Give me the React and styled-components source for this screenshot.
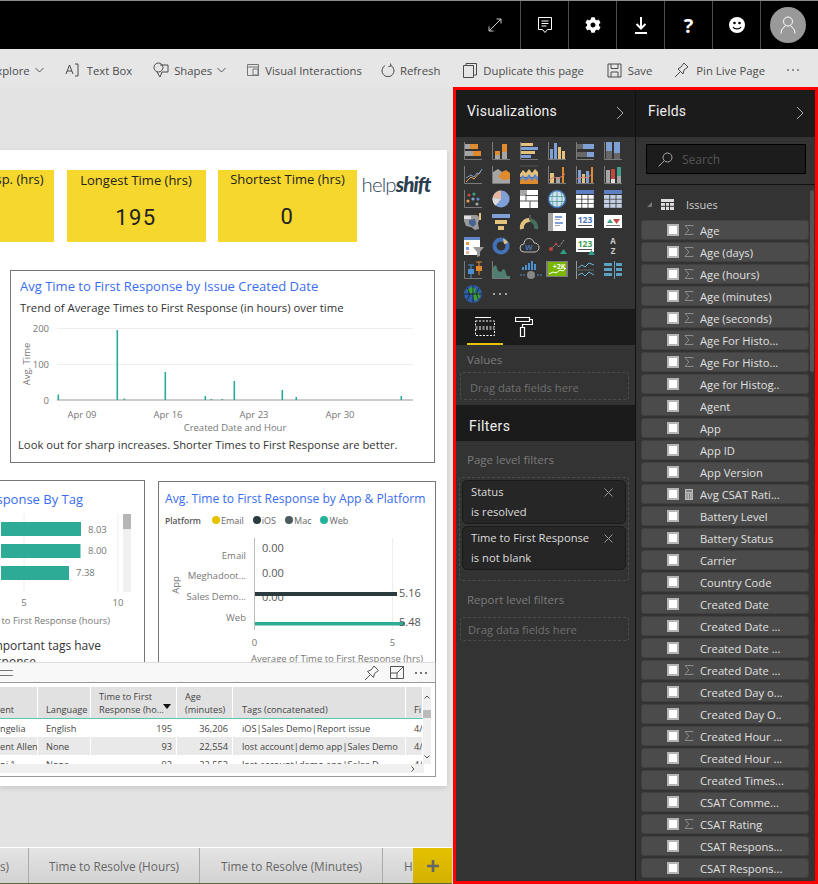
import React from "react";
import styled, { createGlobalStyle } from "styled-components";
import { FaCog } from "react-icons/fa";

const UI = `"Open Sans", "Noto Sans", sans-serif`;
const HEAD = `Roboto, "Open Sans", sans-serif`;
const TEAL = "#2dab97";

const Global = createGlobalStyle`
  * { box-sizing: border-box; }
  html, body { margin: 0; padding: 0; background: #e3e3e3; overflow: hidden; }
  body { font-family: ${UI}; }
`;

const Shell = styled.div`
  width: 818px;
  height: 884px;
  display: flex;
  flex-direction: column;
  overflow: hidden;
`;

/* top black bar */
const TopBar = styled.header`
  height: 49px;
  flex: none;
  background: #000;
  border-top: 1px solid #8a8a8a;
  display: flex;
  justify-content: flex-end;
  color: #fff;
`;
const TopBtn = styled.div`
  width: ${(p) => p.$w || 48}px;
  display: flex;
  align-items: center;
  justify-content: center;
  border-left: ${(p) => (p.$plain ? "none" : "1px solid #4d4d4d")};
  font: 700 20px ${UI};
`;
const Avatar = styled.div`
  width: 36px;
  height: 36px;
  margin-right: 3px;
  border-radius: 50%;
  background: #999;
  display: flex;
  align-items: center;
  justify-content: center;
`;

/* toolbar */
const ToolBar = styled.nav`
  height: 38px;
  flex: none;
  background: #e6e6e6;
  display: flex;
  align-items: center;
  padding-top: 4px;
  margin-left: -10px;
  white-space: nowrap;
`;
const Tool = styled.div`
  display: flex;
  align-items: center;
  gap: ${(p) => p.$gap ?? 5}px;
  margin-left: ${(p) => p.$ml || 0}px;
  font: 400 11.3px ${UI};
  color: #4c4c4c;
  svg { flex: none; }
`;

const Main = styled.main`
  flex: 1;
  min-height: 0;
  display: flex;
`;
const ReportArea = styled.section`
  width: 453px;
  flex: none;
  display: flex;
  flex-direction: column;
`;
const Canvas = styled.div`
  flex: 1;
  min-height: 0;
  padding-top: 63px;
  background: #e3e3e3;
  overflow: hidden;
`;
const Page = styled.div`
  position: relative;
  width: 447px;
  height: 636px;
  background: #fff;
  padding-top: 20px;
  box-shadow: 0 2px 5px rgba(0, 0, 0, 0.12);
  overflow: hidden;
`;

/* kpi cards */
const KpiRow = styled.div`
  display: flex;
  gap: 12.5px;
  margin-left: -85px;
`;
const Kpi = styled.div`
  width: 139px;
  height: 72px;
  background: #f6d72d;
  text-align: center;
  color: #222;
  padding-top: ${(p) => p.$top || 0}px;
`;
const KpiTitle = styled.div`
  font: 400 13px/18px ${UI};
`;
const KpiValue = styled.div`
  font: 400 22px/26px ${HEAD};
  letter-spacing: 1.4px;
  margin-top: 16px;
`;
const Logo = styled.div`
  margin: 1px 0 0 -8px;
  font: 300 20.5px/26px Lato, sans-serif;
  letter-spacing: -0.9px;
  color: #34495e;
  b { font-weight: 900; font-style: italic; color: #2c3e50; }
`;

/* report visuals */
const WideCard = styled.article`
  width: 425px;
  height: 193px;
  margin: 28px 0 0 10px;
  border: 1px solid #777;
  padding: 5px 0 0 9px;
  background: #fff;
`;
const VisualTitle = styled.h3`
  margin: 0;
  font: 400 ${(p) => p.$size || 13}px/20px ${UI};
  color: #3a6df0;
  white-space: nowrap;
  text-align: ${(p) => p.$align || "left"};
  padding-left: ${(p) => p.$pl || 0}px;
  padding-right: ${(p) => p.$pr || 0}px;
`;
const VisualSub = styled.p`
  margin: 2px 0 0;
  font: 400 11.3px/20px ${UI};
  color: #333;
  white-space: nowrap;
`;
const VisualNote = styled.p`
  margin: 3px 0 0 -2px;
  font: 400 11.25px/18px ${UI};
  color: #333;
  white-space: nowrap;
`;
const ChartSvg = styled.svg`
  display: block;
  margin-left: ${(p) => p.$ml || 0}px;
  margin-top: ${(p) => p.$mt || 0}px;
  text { font-family: ${UI}; }
`;
const VisualRow = styled.div`
  display: flex;
  gap: 13px;
  margin: 17px 0 0 -175px;
`;
const HalfCard = styled.article`
  width: ${(p) => p.$w}px;
  height: 200px;
  margin-top: ${(p) => p.$mt || 0}px;
  border: 1px solid #777;
  padding-top: ${(p) => p.$pt || 8}px;
  background: #fff;
  overflow: hidden;
`;
const TagNote = styled.div`
  margin-top: 11px;
  font: 400 12px/16px ${UI};
  color: #333;
  text-align: right;
  padding-right: 43px;
  span { display: block; white-space: nowrap; }
  span + span { padding-right: 65px; }
`;
const Legend = styled.div`
  display: flex;
  align-items: center;
  margin: 3px 0 0 6px;
  height: 16px;
  font: 400 9px ${UI};
  color: #666;
`;
const LegendName = styled.b`
  font-weight: 600;
  font-size: 8.5px;
  margin-right: 11px;
  color: #555;
`;
const LegendItem = styled.span`
  display: flex;
  align-items: center;
  gap: 1px;
  margin-right: 9px;
  &::before {
    content: "";
    width: 8px;
    height: 8px;
    border-radius: 50%;
    background: ${(p) => p.$c};
  }
`;

/* focused table, lies over the two lower visuals */
const TableOverlay = styled.div`
  position: absolute;
  left: 0;
  top: 512px;
  width: 436px;
  height: 115px;
  background: #fff;
  border-right: 1px solid #999;
  border-bottom: 1px solid #999;
  overflow: hidden;
`;
const OverlayBar = styled.div`
  height: 21px;
  background: #f8f8f8;
  border-top: 1px solid #ddd;
  border-bottom: 1px solid #999;
  display: flex;
  align-items: center;
  justify-content: flex-end;
  gap: 10px;
  padding-right: 7px;
  position: relative;
  &::before {
    content: "";
    position: absolute;
    left: 0;
    top: 7px;
    width: 13px;
    height: 4px;
    border-top: 1px solid #777;
    border-bottom: 1px solid #777;
  }
`;
const TableWrap = styled.div`
  margin-top: 4px;
  width: 423px;
  height: 78px;
  overflow: hidden;
`;
const Row = styled.div`
  display: grid;
  grid-template-columns: 38px 53px 86px 56px 173px 17px;
  height: ${(p) => p.$h || 18}px;
  background: ${(p) => p.$bg || "#fff"};
  border-bottom: ${(p) => (p.$head ? `1px solid #5cc5b4` : "none")};
  font: 400 9.2px/13px ${UI};
  color: #444;
`;
const Cell = styled.div`
  display: flex;
  align-items: ${(p) => (p.$head ? "flex-end" : "center")};
  justify-content: ${(p) => (p.$right ? "flex-end" : "flex-start")};
  padding: 0 ${(p) => (p.$right ? 4 : 0)}px ${(p) => (p.$head ? 2 : 0)}px ${(p) => p.$pl ?? 8}px;
  border-right: 1px solid #fff;
  white-space: nowrap;
  overflow: hidden;
  position: relative;
`;
const HeadText = styled.span`
  display: block;
`;
const SortMark = styled.i`
  position: absolute;
  right: 5px;
  bottom: 9px;
  border: 4px solid transparent;
  border-top: 5px solid #111;
  border-bottom: 0;
`;
const VScroll = styled.div`
  position: absolute;
  left: 423px;
  top: 25px;
  width: 8px;
  height: 77px;
  padding: 8px 0 5px;
  background: #f0f0f0;
  display: flex;
  flex-direction: column;
  justify-content: space-between;
  align-items: center;
  &::after {
    content: "";
    position: absolute;
    left: 0;
    top: 23px;
    width: 100%;
    height: 8px;
    background: #bbb;
  }
`;
const HScroll = styled.div`
  position: absolute;
  left: 0;
  top: 102px;
  width: 424px;
  height: 9px;
  padding-right: 9px;
  background: #f0f0f0;
  display: flex;
  align-items: center;
  justify-content: flex-end;
`;

/* tabs */
const TabStrip = styled.div`
  height: 37px;
  flex: none;
  display: flex;
  position: relative;
  overflow: hidden;
  background: linear-gradient(#e4e4e4, #d2d2d2);
  border-top: 1px solid #fff;
  border-bottom: 1px solid #5c6b3c;
  margin-right: 1px;
`;
const PageTab = styled.div`
  width: ${(p) => p.$w}px;
  flex: none;
  border-right: 1px solid #aaa;
  display: flex;
  align-items: center;
  padding-left: ${(p) => p.$pl}px;
  font: 400 11.8px ${UI};
  color: #666;
  white-space: nowrap;
`;
const AddTab = styled.div`
  position: absolute;
  right: 0;
  top: 0;
  bottom: 0;
  width: 39px;
  background: linear-gradient(#e4c200, #d3b000);
  display: flex;
  align-items: center;
  justify-content: center;
`;

/* right panes */
const Panes = styled.aside`
  width: 365px;
  flex: none;
  border: 3px solid #f00;
  display: flex;
  background: #333;
  position: relative;
`;
const Pane = styled.div`
  width: ${(p) => (p.$split ? 180 : 179)}px;
  flex: none;
  display: flex;
  flex-direction: column;
  border-right: ${(p) => (p.$split ? "1px solid #111" : "none")};
  color: #ddd;
  overflow: hidden;
`;
const PaneHead = styled.div`
  height: 47px;
  flex: none;
  background: #1b1b1b;
  display: flex;
  align-items: flex-start;
  justify-content: space-between;
  padding: 13px 11px 0 ${(p) => p.$pl || 11}px;
  font: 400 14px/17px ${HEAD};
  letter-spacing: 0.2px;
  color: #eee;
`;
const Gallery = styled.div`
  height: 172px;
  flex: none;
  padding: 5px 0 0 8px;
  display: grid;
  grid-template-columns: repeat(6, 28px);
  grid-auto-rows: 23.8px;
`;
const VizIcon = styled.svg`
  width: 18px;
  height: 18px;
  overflow: visible;
`;
const PaneTabs = styled.div`
  height: 36px;
  flex: none;
  background: #1b1b1b;
  display: flex;
  padding-left: 11px;
`;
const PaneTab = styled.div`
  width: 36px;
  height: 36px;
  padding-top: 8px;
  margin-right: 3px;
  display: flex;
  justify-content: center;
  border-bottom: 2px solid ${(p) => (p.$on ? "#e6c200" : "transparent")};
`;
const SectionLabel = styled.div`
  font: 400 11.5px/16px ${UI};
  color: #7b7b7b;
  margin: ${(p) => p.$m};
`;
const DropZone = styled.div`
  margin: ${(p) => p.$m || "4px 6px 0 4px"};
  height: ${(p) => p.$h || 28}px;
  border: 1px dashed #4c4c4c;
  border-radius: 3px;
  padding: ${(p) => p.$pt ?? 2}px 0 0 ${(p) => p.$pl || 9}px;
  display: flex;
  align-items: center;
  font: 400 11.2px ${UI};
  color: #707070;
`;
const FilterHead = styled.div`
  height: 36px;
  flex: none;
  margin-top: 5px;
  background: #1b1b1b;
  padding: 13px 0 0 13px;
  font: 400 14px/17px ${HEAD};
  letter-spacing: 0.4px;
  color: #eee;
`;
const FilterZone = styled.div`
  margin: 9px 6px 0 3px;
  height: 104px;
  border: 1px dashed #4c4c4c;
  border-radius: 3px;
  padding: 2px;
  display: flex;
  flex-direction: column;
  gap: 2px;
`;
const FilterChip = styled.div`
  height: 44px;
  background: #262626;
  border: 1px solid #1a1a1a;
  border-radius: 5px;
  padding: 1px 0 0 8px;
  position: relative;
  font: 400 11.2px/20px ${UI};
  color: #ddd;
  white-space: nowrap;
`;
const ChipClose = styled.svg`
  position: absolute;
  right: 12px;
  top: 7px;
`;
const SearchRow = styled.div`
  height: 48px;
  flex: none;
  border-bottom: 1px solid #111;
  padding: 7px 9px 0 10px;
`;
const SearchBox = styled.div`
  height: 30px;
  background: #1c1c1c;
  border: 1px solid #000;
  display: flex;
  align-items: center;
  gap: 9px;
  padding-left: 11px;
  font: 400 12px ${UI};
  color: #555;
`;
const TableHead = styled.div`
  height: 35px;
  flex: none;
  display: flex;
  align-items: center;
  padding: 4px 0 0 10px;
  font: 400 11px ${UI};
  color: #ccc;
`;
const FieldList = styled.div`
  display: flex;
  flex-direction: column;
  gap: 2px;
  padding: 0 6px 0 5px;
`;
const FieldRow = styled.div`
  height: 20px;
  flex: none;
  background: #4b4b4b;
  border: 1px solid #404040;
  border-radius: 3px;
  display: grid;
  grid-template-columns: 25px 17px 16px 1fr;
  align-items: center;
  font: 400 11.2px ${UI};
  color: #e0e0e0;
  white-space: nowrap;
  svg { grid-column: 3; }
  span { grid-column: 4; }
`;
const Check = styled.i`
  grid-column: 2;
  width: 12px;
  height: 12px;
  background: #fff;
  border: 2px solid #b5b5b5;
`;
const FieldScroll = styled.div`
  position: absolute;
  right: 1px;
  top: 100px;
  width: 4px;
  height: 182px;
  background: #555;
  border-radius: 2px;
`;

/* small drawing helpers */
const B = ({ x, y, w, h, f }) => <rect x={x} y={y} width={w} height={h} fill={f} />;
const Ax = () => <path d="M.5 0V17.5H18" stroke="#7a7a7a" fill="none" />;
const OR = "#e08a2e";
const GR = "#a5a5a5";
const TN = "#e3c27f";
const BL = "#7fa0d6";
const DK = "#666";
const WH = "#fff";
const THEAD = "#5b7fc0";

const TableGlyph = ({ head = THEAD, cell = WH }) => (
  <>
    <B x={0} y={0} w={18} h={4} f={head} />
    {[0, 6.2, 12.4].map((x) =>
      [5, 9.5, 14].map((y) => <B key={`${x}-${y}`} x={x} y={y} w={5.4} h={3.8} f={cell} />)
    )}
  </>
);

const Globe = ({ land = "#cfe3f5", sea = "#3b6ab0" }) => (
  <>
    <circle cx="9" cy="9" r="8.5" fill={land} stroke={sea} strokeWidth="1.4" />
    <path d="M1 6.5h16M1 11.5h16M9 .5v17M5.5 1.5c-2 5-2 10 0 15M12.5 1.5c2 5 2 10 0 15" stroke="#4f9a8c" fill="none" strokeWidth=".8" />
  </>
);

const vizIcons = [
  <><Ax /><B x={1} y={2} w={5} h={5} f={GR} /><B x={6} y={2} w={8} h={5} f={OR} /><B x={1} y={9} w={8} h={5} f={GR} /><B x={9} y={9} w={8} h={5} f={OR} /></>,
  <><Ax /><B x={3} y={9} w={5} h={8} f={OR} /><B x={3} y={13} w={5} h={4} f={GR} /><B x={10} y={2} w={5} h={8} f={OR} /><B x={10} y={10} w={5} h={7} f={GR} /></>,
  <><Ax /><B x={1} y={1} w={12} h={3} f={TN} /><B x={1} y={5} w={17} h={3} f={BL} /><B x={1} y={9} w={14} h={3} f={TN} /><B x={1} y={13} w={10} h={3} f={BL} /></>,
  <><Ax /><B x={2} y={7} w={3} h={10} f={BL} /><B x={6} y={1} w={3} h={16} f={BL} /><B x={10} y={5} w={3} h={12} f={TN} /><B x={14} y={9} w={3} h={8} f={TN} /></>,
  <><Ax /><B x={1} y={2} w={6} h={5} f={DK} /><B x={7} y={2} w={11} h={5} f={BL} /><B x={1} y={10} w={10} h={5} f={DK} /><B x={11} y={10} w={7} h={5} f={BL} /></>,
  <><Ax /><B x={2} y={0} w={6} h={9} f={BL} /><B x={2} y={9} w={6} h={8} f={DK} /><B x={10} y={0} w={6} h={11} f={BL} /><B x={10} y={11} w={6} h={6} f={DK} /></>,

  <><Ax /><path d="M2 16l5-5 3 2 7-8" stroke="#e6a04a" fill="none" /><path d="M2 12l5-3 3 2 3-4 2 1 3-5" stroke={BL} fill="none" /></>,
  <><Ax /><path d="M1 17V6l5-3 4 3 4-1 4 3v9z" fill={GR} /><path d="M6 11l4-5 4-2 4 3v6l-6 1z" fill={OR} /></>,
  <><path d="M0 0H18" stroke="#555" /><path d="M0 8l3-4 3 3 3-4 3 4 3-4 3 3v5H0z" fill={TN} /><path d="M0 12l3-3 3 3 3-4 3 4 3-4 3 3v4H0z" fill="#5f86c7" /><path d="M0 15l3-3 3 3 3-3 3 3 3-3 3 3v3H0z" fill={OR} /></>,
  <><Ax /><B x={2} y={7} w={4} h={10} f={TN} /><B x={8} y={11} w={4} h={6} f={GR} /><B x={14} y={1} w={2} h={16} f={OR} /><path d="M1 14l5-3 4 2 7-5" stroke="#d77d62" fill="none" /></>,
  <><Ax /><B x={2} y={4} w={3} h={13} f={BL} /><B x={6} y={8} w={3} h={9} f={TN} /><B x={10} y={5} w={3} h={12} f={BL} /><B x={15} y={1} w={2} h={16} f={OR} /><path d="M1 13l6-2 5 1 5-6" stroke="#d77d62" fill="none" /></>,
  <><Ax /><B x={2} y={4} w={4} h={13} f={GR} /><B x={7} y={9} w={4} h={8} f="#ddd" /><path d="M7 3h4v10H7z" fill="#c0483c" /><B x={13} y={1} w={4} h={9} f="#3f9f88" /><B x={13} y={10} w={4} h={7} f={GR} /></>,

  <><Ax /><circle cx="5" cy="5" r="1.6" fill="#c0483c" /><circle cx="10" cy="4" r="1.6" fill="#3f9f88" /><circle cx="4" cy="11" r="1.6" fill="#e6a04a" /><circle cx="9" cy="9" r="1.6" fill={BL} /><circle cx="14" cy="9" r="1.6" fill="#5f86c7" /><circle cx="13" cy="14" r="1.6" fill={GR} /></>,
  <><circle cx="9" cy="9" r="8.5" fill={BL} /><path d="M9 9V.5A8.5 8.5 0 0 0 .6 8z" fill="#e9b49c" /><path d="M9 9L.6 8a8.5 8.5 0 0 0 3 7.5z" fill="#ddd" /></>,
  <><B x={0} y={0} w={18} h={18} f={WH} /><B x={0} y={0} w={5} h={4} f={GR} /><path d="M6 0v11M0 11h18M0 5h6M6 5.500h12M10 11v7" stroke="#555" fill="none" /></>,
  <Globe />,
  <TableGlyph />,
  <TableGlyph cell="#c3cfe3" />,

  <><path d="M0 2h13l3 3-2 5 1 6-4 1-4-3-5-1-2-5z" fill="#9a9a9a" /><path d="M5 7l6-1 1 5-3 3-4-3z" fill="#44648f" /><B x={15} y={0} w={2} h={7} f="#e3c27f" /><B x={0} y={3} w={7} h={3} f="#ddd" /></>,
  <><B x={0} y={1} w={18} h={4} f={BL} /><B x={3} y={7} w={12} h={4} f={TN} /><B x={6} y={13} w={6} h={4} f={TN} /></>,
  <><path d="M2 16a7.500 7.500 0 0 1 8-9" stroke={TN} strokeWidth="4" fill="none" /><path d="M10 7a7.500 7.500 0 0 1 6 9" stroke="#47705f" strokeWidth="4" fill="none" /><path d="M9 2h2v5H9z" fill="#555" /></>,
  <><B x={0} y={0} w={18} h={18} f={WH} /><B x={0} y={0} w={5} h={18} f={GR} /><B x={7} y={3} w={7} h={2} f={BL} /><B x={7} y={6} w={5} h={1} f={GR} /><B x={7} y={9} w={8} h={2} f={BL} /><B x={7} y={12} w={5} h={1} f={GR} /></>,
  <><B x={0} y={1} w={18} h={14} f={WH} /><text x="9" y="10" fontSize="8.500" fontWeight="700" fill="#4b74b8" textAnchor="middle" fontFamily={UI}>123</text><B x={2} y={12} w={14} h={1} f="#555" /></>,
  <><B x={0} y={2} w={18} h={13} f={WH} /><path d="M3 10l3-4 3 4z" fill="#3f9f88" /><path d="M9 6h7l-3.500 5z" fill="#c0483c" /><B x={2} y={12} w={14} h={1} f="#777" /></>,

  <><B x={0} y={0} w={16} h={18} f={WH} /><B x={0} y={0} w={16} h={3} f="#5f86c7" /><B x={2} y={5} w={3} h={3} f="#e6a04a" /><B x={2} y={10} w={3} h={3} f={BL} /><B x={2} y={14} w={3} h={3} f="#e9b49c" /><path d="M9 10h11l-4 5v4l-3 1v-5z" fill="#999" /></>,
  <><circle cx="9" cy="9" r="6.500" fill="none" stroke="#4472b8" strokeWidth="4" /><path d="M11 1.500a8 8 0 0 1 5 4.500l-4 1z" fill="#e3c27f" /></>,
  <><path d="M4 15a4 4 0 0 1 0-8 5 5 0 0 1 10-1 4.500 4.500 0 0 1 1 9z" fill="none" stroke="#bbb" /><text x="9" y="13" fontSize="7.500" fontWeight="700" fill="#4b74b8" textAnchor="middle" fontFamily={UI}>W</text></>,
  <><path d="M3 12l5-5 3 3 5-7" stroke="#999" fill="none" strokeDasharray="2 1" /><circle cx="3" cy="12" r="2" fill="#c0483c" /><circle cx="8" cy="7" r="1.300" fill="#c0483c" /><path d="M12 17l3.500-5 3.500 5z" fill="#2f9f8c" /></>,
  <><B x={0} y={1} w={18} h={14} f={WH} /><text x="9" y="10" fontSize="8.500" fontWeight="700" fill="#3f9f4f" textAnchor="middle" fontFamily={UI}>123</text><B x={2} y={12} w={14} h={1} f="#555" /><path d="M12 18l3.500-5 3.500 5z" fill="#2f9f8c" /></>,
  <><text x="9" y="7" fontSize="8" fontWeight="700" fill="#ccc" textAnchor="middle" fontFamily={UI}>A</text><text x="9" y="17" fontSize="8" fontWeight="700" fill="#ccc" textAnchor="middle" fontFamily={UI}>Z</text></>,

  <><Ax /><B x={4} y={8} w={6} h={5} f="#4a90d0" /><path d="M7 4v13M4 4h6" stroke="#4a90d0" fill="none" /><B x={12} y={5} w={6} h={5} f={OR} /><path d="M15 1v13M12 1h6" stroke={OR} fill="none" /></>,
  <><Ax /><path d="M1 17V6l3-2 2 6 3 1 2-3 2 1 2 6h3v2z" fill="#4f7f71" /></>,
  <><B x={2} y={6} w={2} h={3} f="#4a90d0" /><B x={5} y={4} w={2} h={5} f="#4a90d0" /><B x={8} y={2} w={2} h={7} f="#4a90d0" /><B x={11} y={0} w={2} h={9} f="#4a90d0" /><B x={14} y={3} w={2} h={6} f="#4a90d0" /><circle cx="11" cy="14" r="4" fill="#888" /><path d="M0 14h5M17 14h6" stroke="#4a90d0" strokeDasharray="2 1" /></>,
  <><B x={-2} y={0} w={22} h={16} f="#7b7b7b" /><B x={0} y={1} w={18} h={14} f="#7ab800" /><text x="11" y="8" fontSize="7" fontWeight="700" fill="#fff" textAnchor="middle" fontFamily={UI}>+2K</text><path d="M1 13l4-2 3 1 4-3 3 1 3-3" stroke="#fff" fill="none" /></>,
  <><path d="M.5 0v18" stroke="#999" /><path d="M2 7l4-3 3 2 4-4 5 2" stroke="#6db5d8" fill="none" /><path d="M2 14l4-2 3 3 4-4 5 3" stroke="#6db5d8" fill="none" /><path d="M0 9h18" stroke="#666" /></>,
  <><B x={0} y={2} w={8} h={3} f="#5da0c0" /><B x={0} y={7} w={8} h={3} f="#5da0c0" /><B x={0} y={12} w={8} h={3} f="#5da0c0" /><path d="M10.500 0v18" stroke="#5da0c0" /><B x={12} y={2} w={6} h={3} f="#5da0c0" /><B x={12} y={7} w={6} h={3} f="#5da0c0" /><B x={12} y={12} w={6} h={3} f="#5da0c0" /></>,

  <><circle cx="9" cy="9" r="9" fill="#2f5ea8" /><path d="M3 5l5-3 4 2-2 4-4 1zM9 9l6-2 1 5-4 4-3-3z" fill="#3f9f3f" /><path d="M0 9h18M9 0v18M3 3c3 4 3 8 0 12M15 3c-3 4-3 8 0 12" stroke="#111" fill="none" strokeWidth=".7" /></>,
  <><circle cx="2" cy="9" r="1" fill="#ccc" /><circle cx="8" cy="9" r="1" fill="#ccc" /><circle cx="14" cy="9" r="1" fill="#ccc" /></>,
];

const Sigma = () => (
  <svg width="10" height="10" viewBox="0 0 10 10">
    <path d="M9 1.500V.5H1l3.800 4.500L1 9.500h8V8.500" fill="none" stroke="#8c8c8c" />
  </svg>
);
const Calc = () => (
  <svg width="10" height="11" viewBox="0 0 10 11">
    <rect x="1" y="0" width="8" height="11" fill="#bbb" />
    <path d="M2 2h6M2.500 5h1M5 5h1M7 5h.5M2.500 7h1M5 7h1M7 7h.5M2.500 9h1M5 9h1M7 9h.5" stroke="#444" />
  </svg>
);

const fields = [
  ["Age", "s"], ["Age (days)", "s"], ["Age (hours)", "s"], ["Age (minutes)", "s"], ["Age (seconds)", "s"],
  ["Age For Histo...", "s"], ["Age For Histo...", "s"], ["Age for Histog.."], ["Agent"], ["App"], ["App ID"],
  ["App Version"], ["Avg CSAT Rati...", "c"], ["Battery Level"], ["Battery Status"], ["Carrier"], ["Country Code"],
  ["Created Date"], ["Created Date ..."], ["Created Date ..."], ["Created Date ...", "s"], ["Created Day o..."],
  ["Created Day O.."], ["Created Hour ...", "s"], ["Created Hour ..."], ["Created Times..."], ["CSAT Comme..."],
  ["CSAT Rating", "s"], ["CSAT Respons..."], ["CSAT Respons..."],
];

const Chevron = () => (
  <svg width="8" height="14" viewBox="0 0 8 14" style={{ marginTop: 3 }}>
    <path d="M1 1l6 6-6 6" fill="none" stroke="#aaa" />
  </svg>
);
const Down = () => (
  <svg width="9" height="6" viewBox="0 0 9 6"><path d="M.5 1l4 4 4-4" fill="none" stroke="#555" /></svg>
);
const S = "#4a4a4a";
const Ic = ({ w = 16, h = 16, children }) => (
  <svg width={w} height={h} viewBox={`0 0 ${w} ${h}`} fill="none" stroke={S} strokeWidth="1">{children}</svg>
);

const WideChart = () => {
  const bars = [[58, 394.5], [117, 330], [124, 398.5], [165, 372], [205, 396], [211, 399], [222, 399], [234, 381], [282, 390], [296, 397], [401, 396]];
  return (
    <ChartSvg width="423" height="115" viewBox="11 318 423 115" $ml={-9}>
      <path d="M57 328.500H413M57 364.500H413" stroke="#eee" />
      <path d="M57 400H413" stroke="#bbb" strokeWidth="1.500" />
      {bars.map(([x, y]) => (
        <rect key={x} x={x - 0.5} y={y} width="1.600" height={400 - y} fill={TEAL} />
      ))}
      <g fontSize="9.500" fill="#777" textAnchor="end">
        <text x="49" y="331.500">200</text>
        <text x="49" y="367.500">100</text>
        <text x="49" y="403.500">0</text>
      </g>
      <g fontSize="9.500" fill="#777" textAnchor="middle">
        <text x="82" y="417.500">Apr 09</text>
        <text x="168" y="417.500">Apr 16</text>
        <text x="254" y="417.500">Apr 23</text>
        <text x="340" y="417.500">Apr 30</text>
        <text x="235" y="430.500">Created Date and Hour</text>
        <text transform="translate(30 364) rotate(-90)">Avg. Time</text>
      </g>
    </ChartSvg>
  );
};

const TagChart = () => (
  <ChartSvg width="144" height="118" viewBox="0 510 144 118" $ml={175}>
    <path d="M23 515V593M117 515V593" stroke="#eee" />
    <rect x="122" y="515" width="8" height="78" fill="#f0f0f0" />
    <rect x="122" y="515" width="8" height="15" fill="#b5b5b5" />
    <rect x="0" y="523" width="80" height="14" fill={TEAL} />
    <rect x="0" y="545" width="79.500" height="14" fill={TEAL} />
    <rect x="0" y="567" width="68" height="14" fill={TEAL} />
    <g fontSize="9.500" fill="#777">
      <text x="87" y="534">8.03</text>
      <text x="87" y="555">8.00</text>
      <text x="75" y="577">7.38</text>
    </g>
    <g fontSize="9.500" fill="#777" textAnchor="middle">
      <text x="23" y="606.500">5</text>
      <text x="117" y="606.500">10</text>
    </g>
    <text x="109" y="624.500" fontSize="9.400" fill="#777" textAnchor="end">e to First Response (hours)</text>
  </ChartSvg>
);

const PlatformChart = () => (
  <ChartSvg width="276" height="140" viewBox="159 530 276 140" $mt={2}>
    <path d="M254.500 538V630" stroke="#bbb" />
    <path d="M392.500 538V630" stroke="#eee" />
    <g fontSize="9.500" fill="#777" textAnchor="end">
      <text x="246" y="559">Email</text>
      <text x="246" y="579">Meghadoot...</text>
      <text x="246" y="600">Sales Demo...</text>
      <text x="246" y="621">Web</text>
    </g>
    <text transform="translate(179 585) rotate(-90)" fontSize="9.500" fill="#777" textAnchor="middle">App</text>
    <g fontSize="11" fill="#555">
      <text x="262" y="552">0.00</text>
      <text x="262" y="577">0.00</text>
      <text x="262" y="601">0.00</text>
    </g>
    <rect x="255" y="592" width="142" height="4" fill="#2b3a3d" />
    <rect x="255" y="622" width="150" height="3.500" fill={TEAL} />
    <g fontSize="11" fill="#555">
      <text x="399" y="597">5.16</text>
      <text x="399" y="626">5.48</text>
    </g>
    <g fontSize="9.500" fill="#777" textAnchor="middle">
      <text x="254.500" y="646">0</text>
      <text x="392.500" y="646">5</text>
      <text x="337" y="662">Average of Time to First Response (hrs)</text>
    </g>
  </ChartSvg>
);

const rows = [
  ["ngelia", "English", "195", "36,206", "iOS|Sales Demo|Report issue", "4/", "#fff"],
  ["ent Allen", "None", "93", "22,554", "lost account|demo app|Sales Demo", "4/", "#e9e9e9"],
  ["ni 1", "None", "93", "22,553", "lost account|demo app|Sales D...", "4/", "#fff"],
];

export default function App() {
  return (
    <Shell>
      <Global />
      <TopBar>
        <TopBtn $plain $w={50}>
          <svg width="14" height="14" viewBox="0 0 14 14" fill="none" stroke="#ccc">
            <path d="M1 13L13 1M8.500 1H13V5.500M1 8.500V13H5.500" />
          </svg>
        </TopBtn>
        <TopBtn>
          <svg width="16" height="18" viewBox="0 0 16 18" fill="none" stroke="#fff">
            <path d="M1.500 1.500h13v12h-4l-2.500 3-2.500-3h-4z" />
            <path d="M4.500 5h7M4.500 7.500h7M4.500 10h5" />
          </svg>
        </TopBtn>
        <TopBtn><FaCog size={16} color="#fff" /></TopBtn>
        <TopBtn>
          <svg width="14" height="17" viewBox="0 0 14 17" fill="none" stroke="#fff" strokeWidth="2">
            <path d="M7 0v11M2.500 7L7 11.500 11.500 7M1 16h12" />
          </svg>
        </TopBtn>
        <TopBtn>?</TopBtn>
        <TopBtn>
          <svg width="16" height="16" viewBox="0 0 16 16">
            <circle cx="8" cy="8" r="8" fill="#fff" />
            <circle cx="5.500" cy="6" r="1.300" fill="#000" />
            <circle cx="10.500" cy="6" r="1.300" fill="#000" />
            <path d="M4 10c1.500 2.500 6.500 2.500 8 0" stroke="#000" strokeWidth="1.300" fill="none" />
          </svg>
        </TopBtn>
        <TopBtn $w={58}>
          <Avatar>
            <svg width="16" height="18" viewBox="0 0 16 18" fill="none" stroke="#fff">
              <circle cx="8" cy="5.500" r="4.500" />
              <path d="M1 17.500c0-4 2.500-6.500 4.500-7.500M15 17.500c0-4-2.500-6.500-4.500-7.500" />
            </svg>
          </Avatar>
        </TopBtn>
      </TopBar>

      <ToolBar>
        <Tool>Explore <Down /></Tool>
        <Tool $ml={21} $gap={6}>
          <Ic>
            <path d="M1 12L4.500 3 8 12M2 9h5M10 2h3v12h-3" />
          </Ic>
          Text Box
        </Tool>
        <Tool $ml={21} $gap={5}>
          <Ic>
            <circle cx="5.500" cy="5.500" r="4.500" />
            <path d="M7 3h8v7H9l-2 5-3-5" />
          </Ic>
          Shapes <Down />
        </Tool>
        <Tool $ml={20} $gap={5}>
          <Ic w={14} h={14}>
            <path d="M1.500 1.500h11v11h-11zM1.500 4h11M7 6h5v6H7z" stroke="#777" />
          </Ic>
          Visual Interactions
        </Tool>
        <Tool $ml={19} $gap={5}>
          <Ic w={14} h={14}>
            <path d="M4 2.500a6 6 0 1 0 6 0M9.500 .5l.5 2.500-2.500.5" />
          </Ic>
          Refresh
        </Tool>
        <Tool $ml={22} $gap={5}>
          <Ic>
            <path d="M1.500 3.500h10v12h-10zM4 3V1.500h10.500V13H12" />
          </Ic>
          Duplicate this page
        </Tool>
        <Tool $ml={23} $gap={6}>
          <Ic w={15} h={15}>
            <path d="M1 1h13v13H1zM4 1v4.500h7V1M4 14V9h7v5" />
          </Ic>
          Save
        </Tool>
        <Tool $ml={22} $gap={6}>
          <Ic>
            <path d="M1 15l5-5M4 7l5 5 1-4 4-3-4-4-3 4z" />
          </Ic>
          Pin Live Page
        </Tool>
        <Tool $ml={21}>
          <svg width="14" height="4" viewBox="0 0 14 4" fill="#777">
            <circle cx="2" cy="2" r="1" /><circle cx="7" cy="2" r="1" /><circle cx="12" cy="2" r="1" />
          </svg>
        </Tool>
      </ToolBar>

      <Main>
        <ReportArea>
          <Canvas>
            <Page>
              <KpiRow>
                <Kpi>
                  <KpiTitle>Avg First Resp. (hrs)</KpiTitle>
                </Kpi>
                <Kpi $top={1}>
                  <KpiTitle>Longest Time (hrs)</KpiTitle>
                  <KpiValue>195</KpiValue>
                </Kpi>
                <Kpi>
                  <KpiTitle>Shortest Time (hrs)</KpiTitle>
                  <KpiValue>0</KpiValue>
                </Kpi>
                <Logo>help<b>shift</b></Logo>
              </KpiRow>

              <WideCard>
                <VisualTitle>Avg Time to First Response by Issue Created Date</VisualTitle>
                <VisualSub>Trend of Average Times to First Response (in hours) over time</VisualSub>
                <WideChart />
                <VisualNote>Look out for sharp increases. Shorter Times to First Response are better.</VisualNote>
              </WideCard>

              <VisualRow>
                <HalfCard $w={320}>
                  <VisualTitle $align="right" $pr={61}>Avg. Time to First Response By Tag</VisualTitle>
                  <TagChart />
                  <TagNote>
                    <span>important tags have</span>
                    <span>response</span>
                  </TagNote>
                </HalfCard>
                <HalfCard $w={278} $mt={1} $pt={7}>
                  <VisualTitle $size={12.1} $pl={6}>Avg. Time to First Response by App &amp; Platform</VisualTitle>
                  <Legend>
                    <LegendName>Platform</LegendName>
                    <LegendItem $c="#e6c100">Email</LegendItem>
                    <LegendItem $c="#2b3a3d">iOS</LegendItem>
                    <LegendItem $c="#4b5a5c">Mac</LegendItem>
                    <LegendItem $c="#23b39b">Web</LegendItem>
                  </Legend>
                  <PlatformChart />
                </HalfCard>
              </VisualRow>

              <TableOverlay>
                <OverlayBar>
                  <svg width="16" height="16" viewBox="0 0 16 16" fill="none" stroke="#555">
                    <path d="M1 15l5-5M3.500 6.500l6 6 1-4 4-3-4.500-4.500-3 4z" />
                  </svg>
                  <svg width="14" height="13" viewBox="0 0 14 13" fill="none" stroke="#555">
                    <path d="M.5 .5h13v12H.5zM.5 7h6.500v5.500M7 7l6-6M9 .5h4.500V5" />
                  </svg>
                  <svg width="14" height="4" viewBox="0 0 14 4" fill="#555">
                    <circle cx="2" cy="2" r="1.100" /><circle cx="7" cy="2" r="1.100" /><circle cx="12" cy="2" r="1.100" />
                  </svg>
                </OverlayBar>
                <TableWrap>
                  <Row $head $h={32} $bg="#e1e1e1">
                    <Cell $head $pl={0}>ent</Cell>
                    <Cell $head>Language</Cell>
                    <Cell $head><HeadText>Time to First<br />Response (ho...</HeadText><SortMark /></Cell>
                    <Cell $head><HeadText>Age<br />(minutes)</HeadText></Cell>
                    <Cell $head $pl={9}>Tags (concatenated)</Cell>
                    <Cell $head>Fi</Cell>
                  </Row>
                  {rows.map((r) => (
                    <Row key={r[0]} $bg={r[6]}>
                      <Cell $pl={0}>{r[0]}</Cell>
                      <Cell>{r[1]}</Cell>
                      <Cell $right>{r[2]}</Cell>
                      <Cell $right>{r[3]}</Cell>
                      <Cell $pl={9}>{r[4]}</Cell>
                      <Cell>{r[5]}</Cell>
                    </Row>
                  ))}
                </TableWrap>
                <VScroll>
                  <svg width="6" height="4" viewBox="0 0 6 4"><path d="M.5 3.500L3 1l2.500 2.500" fill="none" stroke="#555" /></svg>
                  <svg width="6" height="4" viewBox="0 0 6 4"><path d="M.5 .5L3 3 5.500 .5" fill="none" stroke="#555" /></svg>
                </VScroll>
                <HScroll>
                  <svg width="4" height="6" viewBox="0 0 4 6"><path d="M.5 .5L3 3 .5 5.500" fill="none" stroke="#555" /></svg>
                </HScroll>
              </TableOverlay>
            </Page>
          </Canvas>
          <TabStrip>
            <PageTab $w={29} $pl={0}>s)</PageTab>
            <PageTab $w={171} $pl={20}>Time to Resolve (Hours)</PageTab>
            <PageTab $w={183} $pl={21}>Time to Resolve (Minutes)</PageTab>
            <PageTab $w={60} $pl={21}>H</PageTab>
            <AddTab>
              <svg width="12" height="12" viewBox="0 0 12 12">
                <path d="M6 0v12M0 6h12" stroke="#666" strokeWidth="2.600" />
              </svg>
            </AddTab>
          </TabStrip>
        </ReportArea>

        <Panes>
          <Pane $split>
            <PaneHead>Visualizations <Chevron /></PaneHead>
            <Gallery>
              {vizIcons.map((icon, i) => (
                <VizIcon key={i} viewBox="0 0 18 18">{icon}</VizIcon>
              ))}
            </Gallery>
            <PaneTabs>
              <PaneTab $on>
                <svg width="20" height="20" viewBox="0 0 20 20" fill="none" stroke="#fff">
                  <path d="M0 .5h16" />
                  <path d="M.5 4h19v6H.5zM.5 12h19v6.500H.5z" strokeDasharray="2 1.500" />
                </svg>
              </PaneTab>
              <PaneTab>
                <svg width="18" height="20" viewBox="0 0 18 20" fill="none" stroke="#fff" strokeWidth="1.200">
                  <path d="M.5 .5h14v4H.5zM14.500 2.500h3v5H7.500v3M5.500 10.500h4v9h-4z" />
                </svg>
              </PaneTab>
            </PaneTabs>
            <SectionLabel $m="7px 0 0 11px">Values</SectionLabel>
            <DropZone>Drag data fields here</DropZone>
            <FilterHead>Filters</FilterHead>
            <SectionLabel $m="11px 0 0 11px">Page level filters</SectionLabel>
            <FilterZone>
              <FilterChip>
                Status
                <ChipClose width="9" height="9" viewBox="0 0 9 9"><path d="M.5 .5l8 8M8.500 .5l-8 8" stroke="#999" /></ChipClose>
                <br />is resolved
              </FilterChip>
              <FilterChip>
                Time to First Response
                <ChipClose width="9" height="9" viewBox="0 0 9 9"><path d="M.5 .5l8 8M8.500 .5l-8 8" stroke="#999" /></ChipClose>
                <br />is not blank
              </FilterChip>
            </FilterZone>
            <SectionLabel $m="11px 0 0 11px">Report level filters</SectionLabel>
            <DropZone $m="9px 6px 0 4px" $h={24} $pl={7} $pt={0}>Drag data fields here</DropZone>
          </Pane>

          <Pane>
            <PaneHead $pl={12}>Fields <Chevron /></PaneHead>
            <SearchRow>
              <SearchBox>
                <svg width="15" height="15" viewBox="0 0 15 15" fill="none" stroke="#aaa">
                  <circle cx="9.500" cy="5.500" r="4.500" />
                  <path d="M6 9l-5.500 5.500" />
                </svg>
                Search
              </SearchBox>
            </SearchRow>
            <TableHead>
              <svg width="7" height="7" viewBox="0 0 7 7" style={{ marginRight: 8 }}><path d="M6 1v5H1z" fill="#777" /></svg>
              <svg width="13" height="11" viewBox="0 0 13 11" style={{ marginRight: 12 }}>
                <path d="M0 0h13v11H0z" fill="#ddd" />
                <path d="M4.500 3v8M8.500 3v8M0 3.500h13M0 7.300h13" stroke="#333" />
              </svg>
              Issues
            </TableHead>
            <FieldList>
              {fields.map(([name, kind], i) => (
                <FieldRow key={i}>
                  <Check />
                  {kind === "s" && <Sigma />}
                  {kind === "c" && <Calc />}
                  <span>{name}</span>
                </FieldRow>
              ))}
            </FieldList>
          </Pane>
          <FieldScroll />
        </Panes>
      </Main>
    </Shell>
  );
}
